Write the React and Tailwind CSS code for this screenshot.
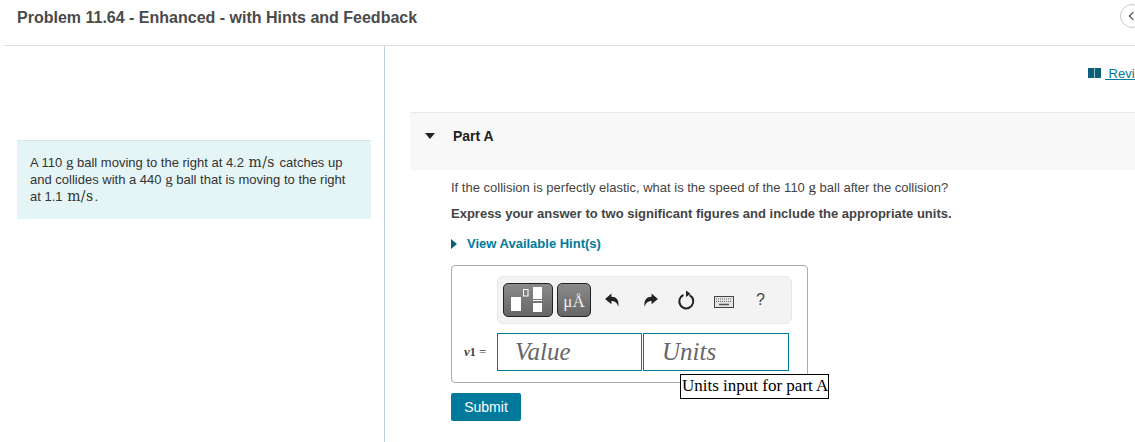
import React from "react";

const M = ({ children }) => (
  <span className="font-['Liberation_Serif',serif] text-[15px] leading-none text-[#333]">{children}</span>
);

const U = () => (
  <span className="mx-[1px] font-['DejaVu_Serif',serif] text-[14px] leading-none tracking-[0.4px] text-[#333]">m/s</span>
);

function Toolbar() {
  return (
    <div className="ml-[45px] mt-[10px] flex h-[48px] w-[295px] items-center rounded-[6px] border border-[#e8e8e8] bg-[#f3f3f3] pl-[5px]">
      <div className="flex h-[34px] w-[50px] items-center justify-center rounded-[5px] border border-[#222] bg-gradient-to-b from-[#8a8a8a] to-[#666]">
        <svg width="36" height="30" viewBox="0 0 36 30">
          <rect x="1" y="12" width="10" height="14" fill="#fff" />
          <rect x="13.5" y="4.5" width="4.5" height="6.5" fill="none" stroke="#fff" strokeWidth="1" />
          <rect x="23" y="2" width="9" height="12" fill="#fff" />
          <rect x="23" y="15" width="9" height="1" fill="#fff" />
          <rect x="23" y="18" width="9" height="9" fill="#fff" />
        </svg>
      </div>
      <div className="ml-[4px] flex h-[34px] w-[34px] items-center justify-center rounded-[5px] border border-[#222] bg-gradient-to-b from-[#8a8a8a] to-[#666] font-['Liberation_Serif',serif] text-[17px] leading-none text-[#eee]">
        <span className="mt-[2px]">μÅ</span>
      </div>
      <svg width="17" height="17" viewBox="0 0 16 16" className="ml-[13px]">
        <path d="M1 6.5 L7 1.5 V4.5 C11.5 4.5 14.5 7.5 13.5 14 C12.5 10.5 10.5 8.5 7 8.5 V11.5 Z" fill="#222" />
      </svg>
      <svg width="17" height="17" viewBox="0 0 16 16" className="ml-[21px]">
        <path d="M15 6.5 L9 1.5 V4.5 C4.5 4.5 1.5 7.5 2.5 14 C3.5 10.5 5.5 8.5 9 8.5 V11.5 Z" fill="#222" />
      </svg>
      <svg width="18" height="20" viewBox="0 0 18 20" className="ml-[18px]" fill="none">
        <path d="M6.5 5 A7 7 0 1 0 12.5 5.2" stroke="#222" strokeWidth="2" />
        <path d="M8 1 L8 7.5 L12.5 4.2 Z" fill="#222" transform="translate(1 -0.5)" />
      </svg>
      <svg width="20" height="12" viewBox="0 0 20 12" className="ml-[19px] mt-[4px]">
        <rect x="0.5" y="0.5" width="19" height="11" fill="#e4e4e4" stroke="#444" />
        <path d="M2 3 H18 M2 5.5 H18" stroke="#666" strokeWidth="1" strokeDasharray="1 1" />
        <path d="M5 8.5 H15" stroke="#555" strokeWidth="1.5" />
      </svg>
      <span className="ml-[22px] font-['Liberation_Sans',sans-serif] text-[16px] text-[#444]">?</span>
    </div>
  );
}

export default function App() {
  return (
    <div className="h-[442px] w-[1135px] overflow-hidden bg-white font-['Liberation_Sans',sans-serif] text-[13px] text-[#333]">
      <header className="relative ml-[4px] h-[46px] border-b border-[#d9e1e7] pl-[13px] pt-[8px]">
        <h1 className="text-[16px] font-bold leading-[20px] text-[#4a4a4a]">
          Problem 11.64 - Enhanced - with Hints and Feedback
        </h1>
        <div className="absolute left-[1116px] top-[4px] flex h-[24px] w-[24px] items-center justify-start rounded-full border border-[#ccc] pl-[9px]">
          <span className="h-[6px] w-[6px] rotate-45 border-b-[1.5px] border-l-[1.5px] border-[#333]" />
        </div>
      </header>
      <div className="flex h-[396px]">
        <aside className="w-[385px] shrink-0 border-r border-[#bcd0de] pl-[17px] pt-[94px]">
          <div className="h-[79px] w-[354px] border-t border-[#d9e6e8] bg-[#e5f5f6] pl-[13px] pt-[13px] text-[13px] leading-[17px] text-[#333]">
            A 110 <M>g</M> ball moving to the right at 4.2 <U /> catches up
            <br />
            and collides with a 440 <M>g</M> ball that is moving to the right
            <br />
            at 1.1 <U />.
          </div>
        </aside>
        <main className="min-w-0 flex-1 overflow-hidden">
          <div className="flex h-[66px] items-start whitespace-nowrap pl-[703px] pt-[19px] text-[13px] leading-[17px] text-[#007a9c]">
            <svg width="13" height="10" viewBox="0 0 13 10" className="mt-[3px] shrink-0">
              <path d="M0 0 H6.2 V10 H0 Z M6.8 0 H13 V10 H6.8 Z" fill="#0b6078" />
            </svg>
            <span className="ml-[4px] underline">&nbsp;Review</span>
          </div>
          <div className="ml-[25px] flex h-[58px] items-start border-t border-[#e8e8e8] bg-[#f8f8f8] pt-[14px]">
            <span className="ml-[15px] mt-[6px] h-0 w-0 border-x-[5px] border-t-[6px] border-x-transparent border-t-[#222]" />
            <span className="ml-[18px] text-[14px] font-bold leading-[18px] text-[#222]">Part A</span>
          </div>
          <div className="pl-[66px]">
            <p className="mt-[9px] whitespace-nowrap text-[13px] leading-[17px] text-[#444]">
              If the collision is perfectly elastic, what is the speed of the 110 <M>g</M> ball after the collision?
            </p>
            <p className="mt-[9px] whitespace-nowrap text-[13px] font-bold leading-[17px] text-[#444]">
              Express your answer to two significant figures and include the appropriate units.
            </p>
            <div className="mt-[13px] flex items-center text-[13px] font-bold leading-[17px] text-[#007a9c]">
              <span className="mr-[10px] h-0 w-0 border-y-[5px] border-l-[6px] border-y-transparent border-l-[#0b6078]" />
              View Available Hint(s)
            </div>
            <div className="relative mt-[13px] h-[118px] w-[357px] rounded-[4px] border border-[#aaa]">
              <Toolbar />
              <div className="mt-[9px] flex items-center">
                <span className="ml-[12px] w-[33px] whitespace-nowrap font-['Liberation_Serif',serif] text-[13px] text-[#444]">
                  <i className="font-bold">v</i><span className="text-[12px] font-bold">1</span> =
                </span>
                <div className="flex h-[38px] w-[145px] items-center border border-[#007a9c] pl-[17px] font-['Liberation_Serif',serif] text-[25px] italic text-[#666]">
                  Value
                </div>
                <div className="ml-[1px] flex h-[38px] w-[146px] items-center border border-[#007a9c] pl-[18px] font-['Liberation_Serif',serif] text-[25px] italic text-[#666]">
                  Units
                </div>
              </div>
              <div className="absolute left-[228px] top-[108px] h-[25px] w-[149px] whitespace-nowrap border border-black bg-white pl-[1px] font-['Liberation_Serif',serif] text-[17px] leading-[22px] text-black">
                Units input for part A
              </div>
            </div>
            <button className="mt-[10px] h-[28px] w-[70px] rounded-[2px] bg-[#007a9c] text-[14px] text-white">
              Submit
            </button>
          </div>
        </main>
      </div>
    </div>
  );
}
